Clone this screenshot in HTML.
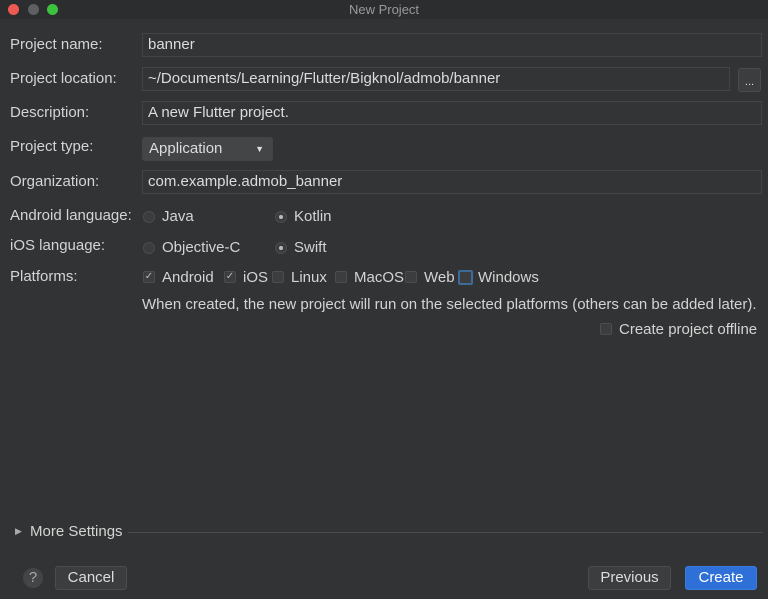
<!DOCTYPE html>
<html><head><style>
body{margin:0;width:768px;height:599px;background:#323334;font-family:"Liberation Sans",sans-serif;color:#d4d4d4;font-size:15px;position:relative;overflow:hidden}
.a{position:absolute;white-space:nowrap}
.in{position:absolute;border:1px solid #424446;background:#333435;box-sizing:border-box;height:24px;padding:2px 5px;color:#dcdcdc}
.rb{position:absolute;width:12px;height:12px;border-radius:50%;background:#3a3c3e;border:1px solid #4a4c4e;box-sizing:border-box}
.rb.on::after{content:"";position:absolute;left:3px;top:3px;width:4px;height:4px;border-radius:50%;background:#bbb}
.cb{position:absolute;width:12px;height:12px;background:#3b3d3f;border:1px solid #4b4d4f;box-sizing:border-box;border-radius:2px;font-size:10px;line-height:10px;text-align:center;color:#bbb}
.btn{position:absolute;height:24px;border:1px solid #4a4c4e;background:#3b3d3f;border-radius:3px;box-sizing:border-box;text-align:center;line-height:22px;color:#ddd}
</style></head><body>
<div class="a" style="left:0;top:0;width:768px;height:19px;background:#2c2d2e"></div>
<div class="a" style="left:8px;top:4px;width:11px;height:11px;border-radius:50%;background:#ee5a52"></div>
<div class="a" style="left:28px;top:4px;width:11px;height:11px;border-radius:50%;background:#5e5f60"></div>
<div class="a" style="left:47px;top:4px;width:11px;height:11px;border-radius:50%;background:#3cc23f"></div>
<div class="a" style="left:0;width:768px;top:2px;text-align:center;font-size:13px;color:#9a9a9a">New Project</div>

<div class="a" style="left:10px;top:36px">Project name:</div>
<div class="in" style="left:142px;top:33px;width:620px">banner</div>
<div class="a" style="left:10px;top:70px">Project location:</div>
<div class="in" style="left:142px;top:67px;width:588px">~/Documents/Learning/Flutter/Bigknol/admob/banner</div>
<div class="btn" style="left:738px;top:68px;width:23px;line-height:26px;font-size:11px">...</div>
<div class="a" style="left:10px;top:104px">Description:</div>
<div class="in" style="left:142px;top:101px;width:620px">A new Flutter project.</div>
<div class="a" style="left:10px;top:138px">Project type:</div>
<div class="btn" style="left:142px;top:137px;width:131px;text-align:left;padding-left:6px;border-color:#444;background:#434547">Application<span style="position:absolute;right:8px;top:0;font-size:9px">▼</span></div>
<div class="a" style="left:10px;top:173px">Organization:</div>
<div class="in" style="left:142px;top:170px;width:620px">com.example.admob_banner</div>

<div class="a" style="left:10px;top:207px">Android language:</div>
<div class="rb" style="left:143px;top:211px"></div><div class="a" style="left:162px;top:208px">Java</div>
<div class="rb on" style="left:275px;top:211px"></div><div class="a" style="left:294px;top:208px">Kotlin</div>
<div class="a" style="left:10px;top:237px">iOS language:</div>
<div class="rb" style="left:143px;top:242px"></div><div class="a" style="left:162px;top:239px">Objective-C</div>
<div class="rb on" style="left:275px;top:242px"></div><div class="a" style="left:294px;top:239px">Swift</div>

<div class="a" style="left:10px;top:268px">Platforms:</div>
<div class="cb" style="left:143px;top:271px">✓</div><div class="a" style="left:162px;top:269px">Android</div>
<div class="cb" style="left:224px;top:271px">✓</div><div class="a" style="left:243px;top:269px">iOS</div>
<div class="cb" style="left:272px;top:271px"></div><div class="a" style="left:291px;top:269px">Linux</div>
<div class="cb" style="left:335px;top:271px"></div><div class="a" style="left:354px;top:269px">MacOS</div>
<div class="cb" style="left:405px;top:271px"></div><div class="a" style="left:424px;top:269px">Web</div>
<div class="cb" style="left:458px;top:270px;width:15px;height:15px;border:2px solid #3e6a9a"></div><div class="a" style="left:478px;top:269px">Windows</div>
<div class="a" style="left:142px;top:296px">When created, the new project will run on the selected platforms (others can be added later).</div>
<div class="cb" style="left:600px;top:323px"></div><div class="a" style="left:619px;top:321px">Create project offline</div>

<div class="a" style="left:15px;top:526px;font-size:9px;color:#aaa">▶</div>
<div class="a" style="left:30px;top:523px">More Settings</div>
<div class="a" style="left:128px;top:532px;width:635px;height:1px;background:#4a4c4e"></div>

<div class="a" style="left:23px;top:568px;width:20px;height:20px;border-radius:50%;background:#434547;text-align:center;line-height:20px;color:#aaa">?</div>
<div class="btn" style="left:55px;top:566px;width:72px">Cancel</div>
<div class="btn" style="left:588px;top:566px;width:83px">Previous</div>
<div class="btn" style="left:685px;top:566px;width:72px;background:#2f6fd8;border-color:#3a7be0;color:#fff">Create</div>
</body></html>
